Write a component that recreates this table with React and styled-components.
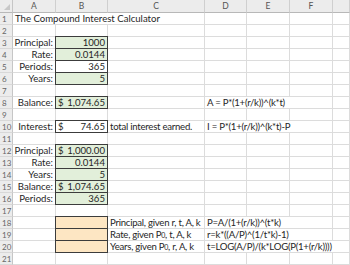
import React from "react";
import styled, { createGlobalStyle } from "styled-components";

const GlobalStyle = createGlobalStyle`
  html, body {
    margin: 0;
    padding: 0;
    background: #ffffff;
  }
  body {
    font-family: Lato, "Liberation Sans", sans-serif;
  }
`;

const GRID_LINE = "#dcdcdc";
const BOX_LINE = "#3c3c3c";
const FILLS = {
  green: "#e2efda",
  orange: "#fde6c3",
};

const Sheet = styled.div`
  display: grid;
  grid-template-columns: 13px 43px 52px 97px 42px 43px 43px 1fr;
  grid-template-rows: 13px repeat(21, 12px);
  width: 350px;
  height: 265px;
  overflow: hidden;
  font-size: 9.6px;
  color: #262626;
`;

const Corner = styled.div`
  position: relative;
  background: #ececec;
  border-right: 1px solid #c6c6c6;
  border-bottom: 1px solid #b8b8b8;
  box-sizing: border-box;
`;

const CornerMark = styled.div`
  position: absolute;
  right: 2px;
  bottom: 2px;
  width: 0;
  height: 0;
  border-left: 6px solid transparent;
  border-bottom: 6px solid #c8c8c8;
`;

const ColHead = styled.div`
  background: #ececec;
  border-right: 1px solid #cfcfcf;
  border-bottom: 1px solid #b8b8b8;
  box-sizing: border-box;
  display: flex;
  align-items: center;
  justify-content: center;
  font-size: 8.5px;
  color: #555;
`;

const RowHead = styled.div`
  background: #ececec;
  border-right: 1px solid #c6c6c6;
  border-bottom: 1px solid #d8d8d8;
  box-sizing: border-box;
  display: flex;
  align-items: center;
  padding-left: 2px;
  font-size: 8px;
  color: #666;
`;

const Cell = styled.div`
  grid-column: span ${(p) => p.$span || 1};
  box-sizing: border-box;
  border-right: 1px solid ${(p) => (p.$boxed ? BOX_LINE : GRID_LINE)};
  border-bottom: 1px solid ${(p) => (p.$boxed ? BOX_LINE : GRID_LINE)};
  background: ${(p) => (p.$fill ? FILLS[p.$fill] : "transparent")};
  box-shadow: ${(p) =>
    p.$boxed
      ? `0 -1px 0 ${BOX_LINE}, -1px 0 0 ${BOX_LINE}, -1px -1px 0 ${BOX_LINE}`
      : "none"};
  display: flex;
  align-items: center;
  justify-content: ${(p) =>
    p.$align === "right" ? "flex-end" : p.$align === "between" ? "space-between" : "flex-start"};
  padding: 0 2px;
  line-height: 11px;
  white-space: nowrap;
  overflow: hidden;
  letter-spacing: ${(p) => (p.$tight ? "-0.25px" : "normal")};
`;

const Sub = styled.span`
  font-size: 7px;
  vertical-align: -1px;
  line-height: 0;
`;

const cols = ["A", "B", "C", "D", "E", "F", ""];

// each row: cells across A..G; empty slots are filled automatically
const rows = {
  1: [{ col: 0, span: 3, text: "The Compound Interest Calculator" }],
  3: [
    { col: 0, text: "Principal:", align: "right" },
    { col: 1, text: "1000", align: "right", fill: "green", boxed: true },
  ],
  4: [
    { col: 0, text: "Rate:", align: "right" },
    { col: 1, text: "0.0144", align: "right", fill: "green", boxed: true },
  ],
  5: [
    { col: 0, text: "Periods:", align: "right" },
    { col: 1, text: "365", align: "right", boxed: true },
  ],
  6: [
    { col: 0, text: "Years:", align: "right" },
    { col: 1, text: "5", align: "right", fill: "green", boxed: true },
  ],
  8: [
    { col: 0, text: "Balance:", align: "right" },
    { col: 1, money: "1,074.65", fill: "green", boxed: true },
    { col: 3, span: 3, tight: true, text: "A = P*(1+(r/k))^(k*t)" },
  ],
  10: [
    { col: 0, text: "Interest:", align: "right" },
    { col: 1, money: "74.65", boxed: true },
    { col: 2, tight: true, text: "total interest earned." },
    { col: 3, span: 3, tight: true, text: "I = P*(1+(r/k))^(k*t)-P" },
  ],
  12: [
    { col: 0, text: "Principal:", align: "right" },
    { col: 1, money: "1,000.00", fill: "green", boxed: true },
  ],
  13: [
    { col: 0, text: "Rate:", align: "right" },
    { col: 1, text: "0.0144", align: "right", fill: "green", boxed: true },
  ],
  14: [
    { col: 0, text: "Years:", align: "right" },
    { col: 1, text: "5", align: "right", fill: "green", boxed: true },
  ],
  15: [
    { col: 0, text: "Balance:", align: "right" },
    { col: 1, money: "1,074.65", fill: "green", boxed: true },
  ],
  16: [
    { col: 0, text: "Periods:", align: "right" },
    { col: 1, text: "365", align: "right", fill: "green", boxed: true },
  ],
  18: [
    { col: 1, fill: "orange", boxed: true },
    { col: 2, tight: true, text: "Principal, given r, t, A, k" },
    { col: 3, span: 3, tight: true, text: "P=A/(1+(r/k))^(t*k)" },
  ],
  19: [
    { col: 1, fill: "orange", boxed: true },
    {
      col: 2,
      tight: true,
      text: (
        <>
          Rate, given P<Sub>0</Sub>, t, A, k
        </>
      ),
    },
    { col: 3, span: 3, tight: true, text: "r=k*((A/P)^(1/t*k)-1)" },
  ],
  20: [
    { col: 1, fill: "orange", boxed: true },
    {
      col: 2,
      tight: true,
      text: (
        <>
          Years, given P<Sub>0</Sub>, r, A, k
        </>
      ),
    },
    { col: 3, span: 4, tight: true, text: "t=LOG(A/P)/(k*LOG(P(1+(r/k))))" },
  ],
};

function SheetRow({ n }) {
  const defs = rows[n] || [];
  const out = [];
  let c = 0;
  while (c < cols.length) {
    const def = defs.find((d) => d.col === c);
    if (def) {
      const content = def.money ? (
        <>
          <span>$</span>
          <span>{def.money}</span>
        </>
      ) : (
        def.text
      );
      out.push(
        <Cell
          key={c}
          $span={def.span}
          $fill={def.fill}
          $boxed={def.boxed}
          $tight={def.tight}
          $align={def.money ? "between" : def.align}
        >
          {content}
        </Cell>
      );
      c += def.span || 1;
    } else {
      out.push(<Cell key={c} />);
      c += 1;
    }
  }
  return (
    <>
      <RowHead>{n}</RowHead>
      {out}
    </>
  );
}

export default function App() {
  return (
    <>
      <GlobalStyle />
      <Sheet>
        <Corner>
          <CornerMark />
        </Corner>
        {cols.map((c, i) => (
          <ColHead key={i}>{c}</ColHead>
        ))}
        {Array.from({ length: 21 }, (_, i) => (
          <SheetRow key={i + 1} n={i + 1} />
        ))}
      </Sheet>
    </>
  );
}
